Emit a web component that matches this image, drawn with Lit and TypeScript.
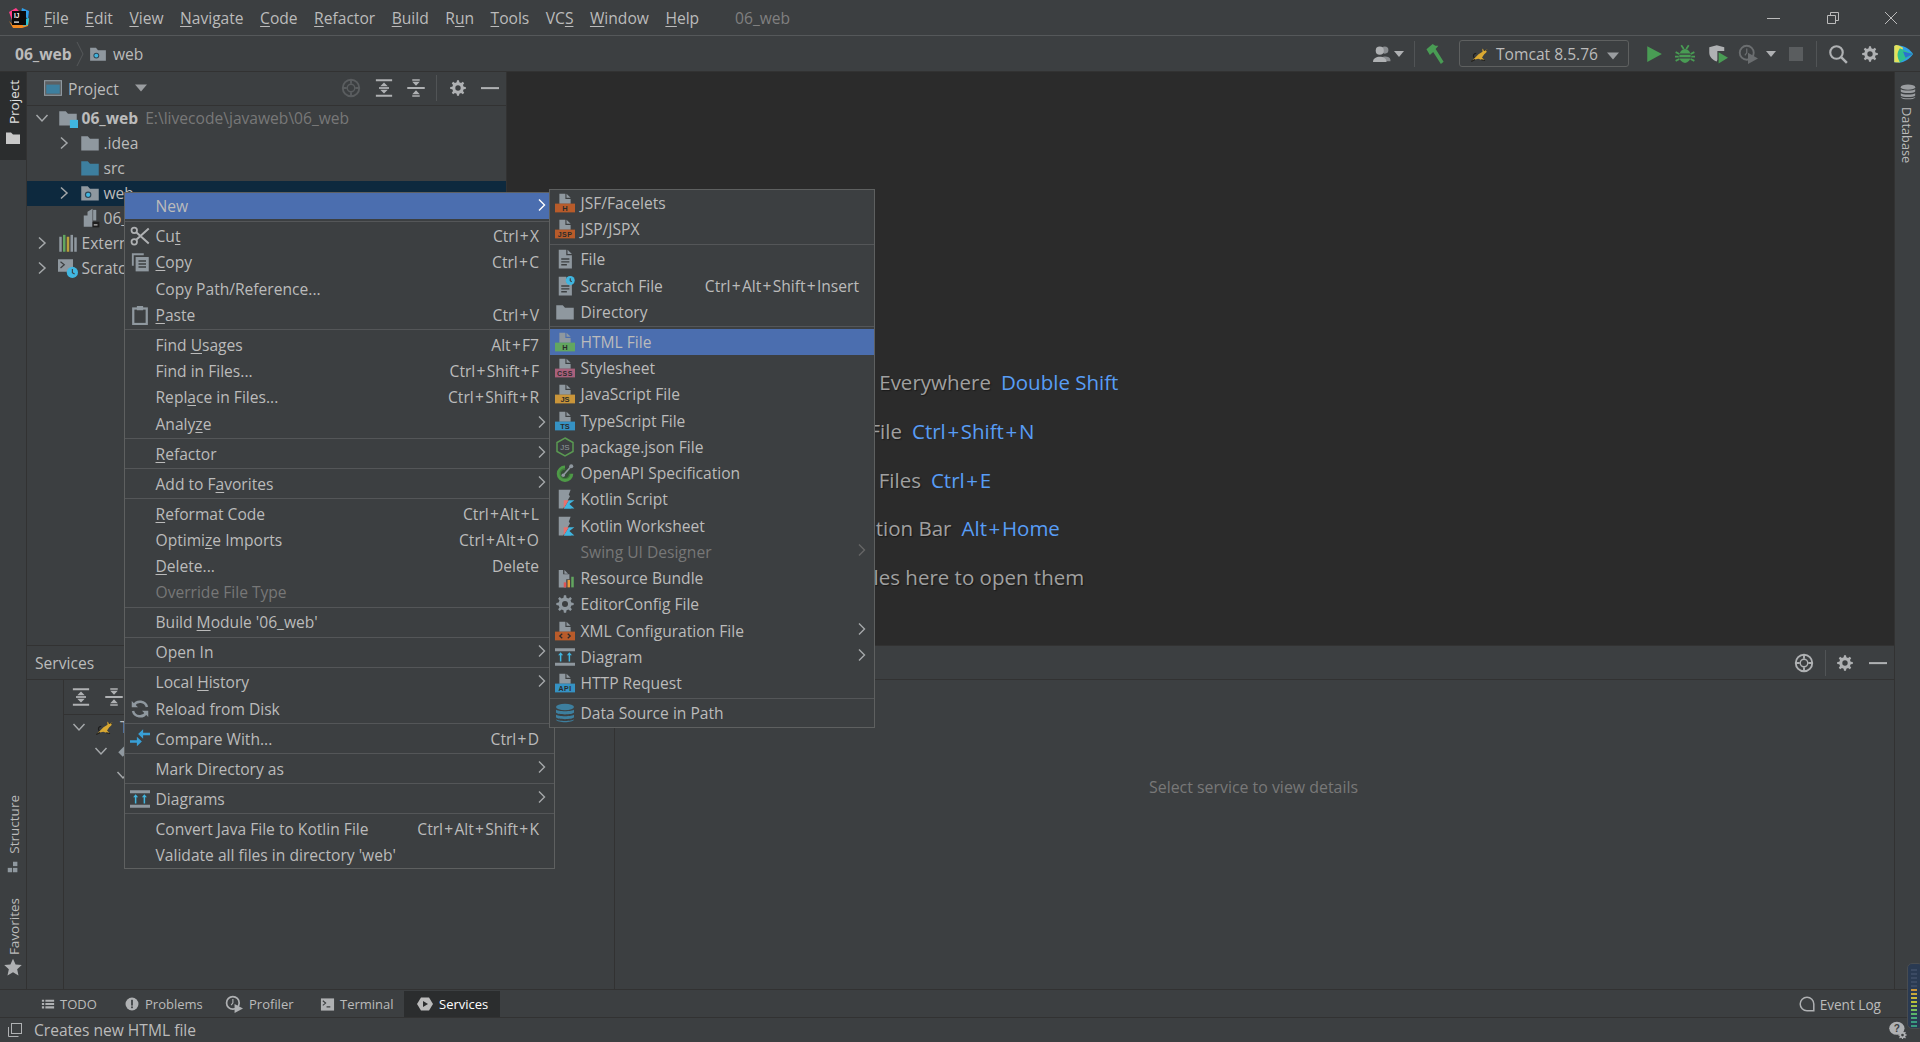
import { LitElement, html, css, svg, nothing, TemplateResult } from "lit";
import { customElement } from "lit/decorators.js";

const G = "#8f989f";
const BLUE = "#40b6e0";
const GREEN = "#499c54";
const DARK = "#3c3f41";

const ic = (body: unknown, size = 20) =>
  html`<svg class="ic" width=${size} height=${size} viewBox="0 0 16 16">${body}</svg>`;

// gear outline computed from teeth count, same shape everywhere
function gearPath(cx: number, cy: number, ro: number, ri: number, teeth = 8) {
  let d = "";
  const step = (Math.PI * 2) / teeth;
  for (let i = 0; i < teeth; i++) {
    const a = i * step - Math.PI / 2;
    const pts = [
      [a - step * 0.3, ri],
      [a - step * 0.16, ro],
      [a + step * 0.16, ro],
      [a + step * 0.3, ri],
    ];
    for (const [t, r] of pts) {
      d += (d ? "L" : "M") + (cx + r * Math.cos(t)).toFixed(2) + " " + (cy + r * Math.sin(t)).toFixed(2);
    }
  }
  return d + "Z";
}

const gear = (c = "#afb1b3") => svg`<path d=${gearPath(8, 8, 7, 5.2)} fill=${c}/><circle cx="8" cy="8" r="2.4" fill=${DARK}/>`;
const folder = (c = G) => svg`<path d="M1 2.5h5.2L8 4.6h7V14H1z" fill=${c}/>`;
const dotFolder = svg`${folder("#8f989f")}<circle cx="6.5" cy="9.4" r="2.6" fill="#2f4655"/><circle cx="6.5" cy="9.4" r="1.7" fill=${BLUE}/>`;

const docTop = svg`<path d="M3.5 0.5h4.8v4.2h4.2V8.5h-9z" fill=${G}/><path d="M9.2 0.5l3.3 3.3H9.2z" fill=${G}/>`;
const banner = (color: string, label: string, dark = "#2b2b2b") =>
  svg`${docTop}<rect x="0" y="8.5" width="16" height="7" fill=${color}/><text x="8" y="14.3" text-anchor="middle" font-family="Liberation Sans, sans-serif" font-size=${label.length > 2 ? 5.6 : 6} font-weight="700" letter-spacing=${label.length > 2 ? 0.4 : 0} fill=${dark}>${label}</text>`;
const plainDoc = svg`<path d="M3 .5h6v4.5h4.5V15.5H3z" fill=${G}/><path d="M10 .5l3.5 3.5H10z" fill=${G}/><path d="M5 8h6.5M5 10.3h6.5M5 12.6h4.5" stroke=${DARK} stroke-width="1.1"/>`;
const kotlin = svg`<path d="M3 .5h9.5L11 4.5l1 1.3L6.5 15.5H3z" fill=${G}/><path d="M7 15.5L11 9h4.5L11.5 12l4 3.5z" fill="#40b6e0"/><path d="M7 15.5V9h4z" fill="#e8716d"/><path d="M7 15.5l4-3.5 2 3.5z" fill="#40b6e0"/>`;
const diagram = svg`<rect x="0" y="1" width="16" height="2.4" fill=${G}/><rect x="0" y="12.6" width="16" height="2.4" fill=${G}/><path d="M4.5 11.5V6M11.5 11.5V6" stroke=${BLUE} stroke-width="1.2"/><path d="M4.5 4.2l2 2.4h-4zM11.5 4.2l2 2.4h-4z" fill=${BLUE}/>`;
const database = (c: string) => svg`<ellipse cx="8" cy="3.2" rx="7.2" ry="2.6" fill=${c}/><path d="M.8 5.2C2 7 14 7 15.2 5.2V7.6C14 9.6 2 9.6 .8 7.6zM.8 9.2C2 11 14 11 15.2 9.2V11.4C14 13.4 2 13.4 .8 11.4zM.8 13C2 14.8 14 14.8 15.2 13V13.4C14 16 2 16 .8 13.4z" fill=${c}/>`;

const tomcatIcon = svg`<path d="M1 14l3-1.6 2.6-.6L9 12.6l3 .6-2.4-2.4 1.8-2.6 1.6-1.4.8-2.6-1.2.8h-1.4L9.8 3.6 10 6.2 6.8 8.2 4.2 10.8z" fill="#d9a832"/><path d="M1 14l3-1.6M5 7.5C3 7.5 2 9 3.4 11.2M9 12.6l3 .6" stroke="#1d1d1d" stroke-width="1" fill="none"/><circle cx="11.4" cy="5" r=".5" fill="#222"/><circle cx="13" cy="5" r=".5" fill="#222"/>`;

const icons: Record<string, TemplateResult | unknown> = {
  scissors: svg`<circle cx="3.4" cy="3.4" r="2.2" fill="none" stroke="#afb1b3" stroke-width="1.4"/><circle cx="3.4" cy="12.6" r="2.2" fill="none" stroke="#afb1b3" stroke-width="1.4"/><path d="M5 5l10 9M5 11L15 2" stroke="#afb1b3" stroke-width="1.6"/>`,
  copy: svg`<path d="M1.5 1H11v1.5H3V11H1.5z" fill=${G}/><rect x="4.5" y="4" width="10.5" height="11.5" fill=${G}/><path d="M6.8 7.2h6M6.8 9.6h6M6.8 12h6" stroke=${DARK} stroke-width="1.1"/>`,
  paste: svg`<rect x="2.6" y="2.8" width="10.8" height="12.4" fill="none" stroke=${G} stroke-width="1.8"/><rect x="5.5" y=".8" width="5" height="3.4" fill=${G}/>`,
  reload: svg`<path d="M13.6 6.4A5.8 5.8 0 0 0 3 5M2.4 9.6A5.8 5.8 0 0 0 13 11" fill="none" stroke=${G} stroke-width="2"/><path d="M1.4 1.6v5h5zM14.6 14.4v-5h-5z" fill=${G}/>`,
  compare: svg`<path d="M0 11h6.5V8.2L10.5 12l-4 3.8V13H0z" fill="#389fd6" transform="translate(-1 -2)"/><path d="M16 5H9.5V7.8L5.5 4l4-3.8V3H16z" fill="#389fd6" transform="translate(1 0)"/>`,
  diagram,
  jsf: banner("#b85b2a", "H"),
  jsp: banner("#b85b2a", "JSP"),
  file: plainDoc,
  scratch: svg`${plainDoc}<circle cx="12.2" cy="3.6" r="3.6" fill=${BLUE}/><path d="M12.2 1.8v2l1.2.8" stroke=${DARK} stroke-width=".9" fill="none"/>`,
  dir: folder(),
  html: banner("#62a65f", "H"),
  css: banner("#a8607b", "CSS"),
  js: banner("#c9953a", "JS"),
  ts: banner("#3592c4", "TS"),
  pkg: svg`<path d="M8 .8l6.4 3.6v7.2L8 15.2l-6.4-3.6V4.4z" fill="none" stroke="#5a9a52" stroke-width="1.2"/><text x="8" y="10.6" text-anchor="middle" font-family="Liberation Sans, sans-serif" font-size="6.4" fill=${G}>JS</text>`,
  openapi: svg`<path d="M8 2a6.6 6.6 0 1 0 6.6 6.6h-3.3A3.3 3.3 0 1 1 8 5.3z" fill="#4e9a47"/><circle cx="8" cy="8.4" r="4.4" fill="#2f5a30" opacity=".5"/><path d="M6.8 9.6L12.6 3" stroke=${G} stroke-width="1.3"/><circle cx="6.6" cy="9.8" r="1.4" fill=${G}/><circle cx="13" cy="2.6" r="1.6" fill=${G}/>`,
  kotlin,
  bundle: svg`<path d="M3 1.5h3.5V5h5v4H9v6.5H3z" fill=${G}/><path d="M7.5 1.5l3 3h-3z" fill=${G}/><rect x="7" y="11.5" width="2" height="4" fill="#e05555"/><rect x="10" y="9.5" width="2" height="6" fill="#e89a3c"/><rect x="13" y="7" width="2" height="8.5" fill="#62a65f"/>`,
  editorconfig: gear(G),
  xml: svg`${docTop}<rect x="0" y="8.5" width="16" height="7" fill="#b85b2a"/><path d="M5.8 10.2L3.8 12l2 1.8M10.2 10.2L12.2 12l-2 1.8" fill="none" stroke="#2b2b2b" stroke-width="1"/>`,
  http: banner("#3592c4", "API"),
  data: database("#3d7f9f"),
  tomcat: tomcatIcon,
};

type Item = { t?: string; k?: string; i?: string; sub?: boolean; on?: boolean; off?: boolean };

const mainMenu: (Item | null)[] = [
  { t: "New", sub: true, on: true },
  null,
  { t: "Cu&t", k: "Ctrl+X", i: "scissors" },
  { t: "&Copy", k: "Ctrl+C", i: "copy" },
  { t: "Copy Path/Reference..." },
  { t: "&Paste", k: "Ctrl+V", i: "paste" },
  null,
  { t: "Find &Usages", k: "Alt+F7" },
  { t: "Find in Files...", k: "Ctrl+Shift+F" },
  { t: "Repl&ace in Files...", k: "Ctrl+Shift+R" },
  { t: "Analy&ze", sub: true },
  null,
  { t: "&Refactor", sub: true },
  null,
  { t: "Add to F&avorites", sub: true },
  null,
  { t: "&Reformat Code", k: "Ctrl+Alt+L" },
  { t: "Optimi&ze Imports", k: "Ctrl+Alt+O" },
  { t: "&Delete...", k: "Delete" },
  { t: "Override File Type", off: true },
  null,
  { t: "Build &Module '06_web'" },
  null,
  { t: "Open In", sub: true },
  null,
  { t: "Local &History", sub: true },
  { t: "Reload from Disk", i: "reload" },
  null,
  { t: "Compare With...", k: "Ctrl+D", i: "compare" },
  null,
  { t: "Mark Directory as", sub: true },
  null,
  { t: "Diagrams", sub: true, i: "diagram" },
  null,
  { t: "Convert Java File to Kotlin File", k: "Ctrl+Alt+Shift+K" },
  { t: "Validate all files in directory 'web'" },
];

const newMenu: (Item | null)[] = [
  { t: "JSF/Facelets", i: "jsf" },
  { t: "JSP/JSPX", i: "jsp" },
  null,
  { t: "File", i: "file" },
  { t: "Scratch File", k: "Ctrl+Alt+Shift+Insert", i: "scratch" },
  { t: "Directory", i: "dir" },
  null,
  { t: "HTML File", i: "html", on: true },
  { t: "Stylesheet", i: "css" },
  { t: "JavaScript File", i: "js" },
  { t: "TypeScript File", i: "ts" },
  { t: "package.json File", i: "pkg" },
  { t: "OpenAPI Specification", i: "openapi" },
  { t: "Kotlin Script", i: "kotlin" },
  { t: "Kotlin Worksheet", i: "kotlin" },
  { t: "Swing UI Designer", sub: true, off: true },
  { t: "Resource Bundle", i: "bundle" },
  { t: "EditorConfig File", i: "editorconfig" },
  { t: "XML Configuration File", sub: true, i: "xml" },
  { t: "Diagram", sub: true, i: "diagram" },
  { t: "HTTP Request", i: "http" },
  null,
  { t: "Data Source in Path", i: "data" },
];

// "Cu&t" -> Cu<u>t</u>
function mn(text: string) {
  const p = text.indexOf("&");
  if (p < 0) return text;
  return html`${text.slice(0, p)}<u>${text[p + 1]}</u>${text.slice(p + 2)}`;
}

// the plus signs of shortcuts run wider than in our font
function keys(text: string) {
  const parts = text.split("+");
  return parts.map((p, i) => (i ? html`<span class="pl">+</span>${p}` : p));
}

const menuBar = ["&File", "&Edit", "&View", "&Navigate", "&Code", "&Refactor", "&Build", "R&un", "&Tools", "VC&S", "&Window", "&Help"];

// row of icons given by their centre x, gaps come from the data
function seq(start: number, items: { c: number; w: number; h: unknown }[]) {
  let x = start;
  return items.map((it) => {
    const left = it.c - it.w / 2;
    const gap = left - x;
    x = left + it.w;
    return html`<span class="slot" style="margin-left:${gap}px;width:${it.w}px">${it.h}</span>`;
  });
}

const caret = html`<svg width="12" height="8" viewBox="0 0 12 8"><path d="M0 .5h12L6 7.5z" fill="#9a9da0"/></svg>`;
const smallCaret = html`<svg width="10" height="6" viewBox="0 0 10 6"><path d="M0 0h10L5 6z" fill="#afb1b3"/></svg>`;
const sep = html`<span class="vsep"></span>`;
const chevR = html`<svg width="10" height="14" viewBox="0 0 10 14"><path d="M2 1.5L8 7l-6 5.5" fill="none" stroke="#a5a8aa" stroke-width="1.5"/></svg>`;
const chevD = html`<svg width="14" height="10" viewBox="0 0 14 10"><path d="M1.5 2L7 8l5.5-6" fill="none" stroke="#a5a8aa" stroke-width="1.5"/></svg>`;

const target = (c: string) => ic(svg`<circle cx="8" cy="8" r="6.6" fill="none" stroke=${c} stroke-width="1.5"/><circle cx="8" cy="8" r="3" fill="none" stroke=${c} stroke-width="1.1"/><path d="M8 1v3.6M8 11.4V15M1 8h3.6M11.4 8H15" stroke=${c} stroke-width="1.5"/>`, 20);
const expandAll = ic(svg`<path d="M1.5 1h13v1.6h-13zM1.5 13.4h13V15h-13z" fill="#afb1b3"/><path d="M8 3.6l3 3H5zM8 12.4l3-3H5z" fill="#afb1b3"/><rect x="4" y="7.3" width="8" height="1.4" fill="#afb1b3"/>`);
const collapseAll = ic(svg`<rect x="1" y="7.2" width="14" height="1.6" fill="#afb1b3"/><path d="M8 6.2L5 3h6zM8 9.8L5 13h6z" fill="#afb1b3"/><rect x="5" y="1" width="6" height="1.2" fill="#afb1b3"/><rect x="5" y="13.8" width="6" height="1.2" fill="#afb1b3"/>`);

const tree = [
  { lv: 0, open: true, icon: svg`${folder()}<rect x="9.5" y="9.5" width="6.5" height="6.5" fill=${BLUE}/>`, name: "06_web", path: "E:\\livecode\\javaweb\\06_web", bold: true },
  { lv: 1, closed: true, icon: folder(), name: ".idea" },
  { lv: 1, icon: folder("#3d7f9f"), name: "src" },
  { lv: 1, closed: true, icon: dotFolder, name: "web", sel: true },
  { lv: 1, icon: svg`<path d="M3 6h3V3l4-2.5V15H3z" fill=${G}/><path d="M10.5 1.5h2.5V10h-2.5z" fill=${G}/><rect x="10" y="11" width="5.5" height="4.5" fill="#1e1e1e"/><rect x="11" y="13" width="3" height="1" fill="#bbb"/>`, name: "06_web.iml" },
  { lv: 0, closed: true, icon: svg`<rect x="1" y="3" width="2" height="12" fill=${G}/><rect x="4" y="1.5" width="2" height="13.5" fill="#62a65f"/><rect x="7" y="3" width="2" height="12" fill="#b8a13c"/><rect x="10" y="1.5" width="2" height="13.5" fill=${G}/><rect x="13" y="3.5" width="2" height="11.5" fill=${G}/>`, name: "External Libraries" },
  { lv: 0, closed: true, icon: svg`<rect x="0" y="1" width="12" height="10" fill=${G}/><path d="M2 3l3 2.4L2 8" stroke=${DARK} stroke-width="1" fill="none"/><circle cx="11.5" cy="11.5" r="4.5" fill=${BLUE}/><path d="M11.5 8.8v3l1.8 1" stroke=${DARK} stroke-width=".9" fill="none"/>`, name: "Scratches and Consoles" },
];

const hints: { off: number; t: string; k?: string }[] = [
  { off: -1, t: "Search Everywhere", k: "Double Shift" },
  { off: 2, t: "Go to File", k: "Ctrl+Shift+N" },
  { off: -2, t: "Recent Files", k: "Ctrl+E" },
  { off: 1, t: "Navigation Bar", k: "Alt+Home" },
  { off: -2, t: "Drop files here to open them" },
];

@customElement("app-root")
export class AppRoot extends LitElement {
  static styles = css`
    :host {
      display: block;
      width: 1920px;
      height: 1042px;
      position: relative;
      overflow: hidden;
      background: #3c3f41;
      color: #bbbbbb;
      font-family: "Open Sans", "Noto Sans", sans-serif;
      font-size: 15.6px;
    }
    .ic { display: block; flex: none; }
    u { text-underline-offset: 2px; text-decoration-thickness: 1px; }
    .pl { margin: 0 0.08em; }
    .slot { display: flex; align-items: center; justify-content: center; flex: none; }
    .vsep { display: block; width: 1px; height: 26px; background: #515456; }

    .page { display: flex; flex-direction: column; height: 100%; }

    .title { height: 35px; display: flex; align-items: center; border-bottom: 1px solid #55585a; flex: none; }
    .logo { margin-left: 9px; width: 20px; height: 20px; flex: none; }
    .mbar { display: flex; gap: 16.5px; margin-left: 15px; color: #bbbbbb; }
    .ptitle { margin-left: 36px; color: #808080; }
    .winbtns { margin-left: auto; margin-right: 22px; display: flex; }

    .nav { height: 35px; display: flex; align-items: center; border-bottom: 1px solid #323232; flex: none; }
    .crumb { margin-left: 15px; font-weight: 700; width: 58px; color: #bbbbbb; }
    .crumb-sep { width: 8px; height: 26px; margin-left: 3px; }
    .crumb-ic { margin-left: 5px; }
    .crumb-web { margin-left: 6px; }
    .nav-right { margin-left: auto; padding-right: 7px; display: flex; align-items: center; }
    .combo {
      width: 170px; height: 27px; box-sizing: border-box; flex: none;
      border: 1px solid #5e6060; border-radius: 3px;
      display: flex; align-items: center; padding-left: 10px; gap: 6px;
      color: #bbbbbb;
    }
    .combo-c { margin-left: 3px; }

    .mid { flex: 1; display: flex; min-height: 0; }
    .stripe { width: 26px; flex: none; display: flex; flex-direction: column; align-items: center; border-right: 1px solid #323232; }
    .stripe.right { border-right: none; border-left: 1px solid #323232; padding-top: 12px; padding-left: 1px; box-sizing: border-box; }
    .vt { writing-mode: vertical-rl; transform: rotate(180deg); font-size: 13.5px; line-height: 16px; margin-left: 1px; }
    .vtr { writing-mode: vertical-rl; font-size: 12.8px; line-height: 16px; margin-top: 7px; margin-right: 3px; }
    .vtab {
      width: 26px; height: 88px; background: #2b2d2e; display: flex; flex-direction: column;
      align-items: center; padding-top: 8px; box-sizing: border-box; gap: 6px; color: #e0e0e0;
    }
    .vtab.plain { background: none; height: auto; padding: 0; color: #bbbbbb; }
    .spring { flex: 1; }
    .s-struct { margin-bottom: 24px; }
    .s-fav { margin-bottom: 13px; gap: 3px; }

    .work { flex: 1; display: flex; flex-direction: column; min-width: 0; }
    .upper { height: 573px; display: flex; flex: none; }
    .project { width: 479px; flex: none; border-right: 1px solid #323232; }
    .phead { height: 32.5px; display: flex; align-items: center; border-bottom: 1px solid #323232; }
    .phead .name { margin-left: 6px; margin-top: 1px; width: 55px; }
    .row { height: 25px; display: flex; align-items: center; white-space: nowrap; }
    .row.sel { background: #0d293e; }
    .row .arrow { width: 14px; display: flex; justify-content: center; flex: none; }
    .row.lv0 { padding-left: 8px; }
    .row.lv1 { padding-left: 30px; }
    .row .label { margin-left: 3.5px; }
    .row .bold { font-weight: 700; }
    .row .path { color: #787878; margin-left: 7px; }
    .row .gap { width: 9px; flex: none; }

    .editor { flex: 1; background: #2b2b2b; display: flex; flex-direction: column; padding-top: 295px; padding-left: 303px; box-sizing: border-box; }
    .hint { height: 48.8px; font-size: 20.5px; line-height: 30px; color: #a0a0a0; text-shadow: 1px 1px 1px #1a1a1a; white-space: nowrap; }
    .hint b { font-weight: 400; color: #589df6; margin-left: 10px; text-shadow: none; }

    .services { flex: 1; display: flex; flex-direction: column; border-top: 1px solid #323232; min-height: 0; }
    .shead { height: 33px; display: flex; align-items: center; border-bottom: 1px solid #323232; flex: none; }
    .shead .name { margin-left: 8px; }
    .shead .tools { margin-left: auto; padding-right: 7px; display: flex; align-items: center; }
    .sbody { flex: 1; display: flex; min-height: 0; }
    .sleft { width: 36px; border-right: 1px solid #323232; flex: none; }
    .stree { width: 550px; border-right: 1px solid #323232; flex: none; display: flex; flex-direction: column; }
    .stool { height: 34px; display: flex; align-items: center; border-bottom: 1px solid #323232; flex: none; }
    .srow { height: 24px; display: flex; align-items: center; white-space: nowrap; overflow: hidden; }
    .srow.a { padding-left: 8px; gap: 9px; }
    .srow.a span { margin-left: -4px; }
    .srow.b { padding-left: 30px; gap: 8px; }
    .srow.c { padding-left: 52px; }
    .sdetail { flex: 1; display: flex; align-items: center; justify-content: center; color: #787878; padding-bottom: 96px; padding-right: 2px; font-size: 15.9px; }

    .toolbar { height: 26px; display: flex; align-items: center; border-top: 1px solid #323232; border-bottom: 1px solid #323232; flex: none; font-size: 13px; padding-top: 1px; box-sizing: content-box; }
    .tw { display: flex; align-items: center; height: 100%; flex: none; box-sizing: border-box; }
    .tw.todo { margin-left: 41px; width: 84px; gap: 5px; }
    .tw.prob { width: 100px; gap: 6px; }
    .tw.prof { width: 94.5px; gap: 6px; }
    .tw.term { width: 84.5px; gap: 5.5px; }
    .tw.serv { width: 96px; background: #2b2d2e; color: #fff; padding-left: 13px; gap: 6px; }
    .tw.log { margin-left: auto; margin-right: 39px; gap: 5px; font-size: 13.6px; }

    .status { height: 24px; flex: none; display: flex; align-items: center; }
    .status .msg { margin-left: 11px; font-size: 15.6px; }
    .status .help { margin-left: auto; margin-right: 13px; }

    .popup {
      position: absolute; box-sizing: border-box; background: #3c3f41; border: 1px solid #5e6060;
      display: flex; flex-direction: column; white-space: nowrap;
    }
    .popup.main { left: 124px; top: 192px; width: 431px; height: 677px; }
    .popup.sub { left: 549px; top: 189px; width: 326px; height: 539px; }
    .mi { height: 26.25px; flex: none; display: flex; align-items: center; padding-left: 5px; }
    .mi .mi-ic { width: 20px; height: 20px; flex: none; margin-right: 5.5px; }
    .mi .k { margin-left: auto; padding-right: 15px; }
    .mi .arr { margin-left: auto; margin-right: 8px; margin-top: -3px; display: flex; }
    .mi.on { background: #4b6eaf; }
    .mi.off { color: #777777; }
    .msep { height: 3.75px; flex: none; display: flex; align-items: center; }
    .msep::after { content: ""; flex: 1; height: 1px; background: #545658; }
    .meter {
      position: absolute; left: 1907px; top: 963px; width: 16px; height: 66px; box-sizing: border-box;
      border-radius: 5px; background: #2a3a52; border: 1px solid #4a4d50;
      display: flex; flex-direction: column; gap: 2px; padding: 5px 2px 4px 3px;
    }
    .meter i { display: block; height: 2px; width: 6px; flex: none; }
  `;

  private menu(items: (Item | null)[]) {
    return items.map((m) =>
      m === null
        ? html`<div class="msep"></div>`
        : html`<div class="mi ${m.on ? "on" : ""} ${m.off ? "off" : ""}">
            <span class="mi-ic">${m.i ? ic(icons[m.i]) : nothing}</span>
            <span>${mn(m.t!)}</span>
            ${m.k ? html`<span class="k">${keys(m.k)}</span>` : nothing}
            ${m.sub
              ? html`<span class="arr"><svg width="8" height="14" viewBox="0 0 8 14"><path d="M1 1.5L6.5 7 1 12.5" fill="none" stroke=${m.on ? "#ffffff" : m.off ? "#666" : "#a5a8aa"} stroke-width="1.4"/></svg></span>`
              : nothing}
          </div>`
    );
  }

  private meter() {
    const cols = ["#3b4a63", "#3b4a63", "#3b4a63", "#3b4a63", "#3b4a63", "#c9953a", "#c9a83a", "#c9b83a", "#b8c03a", "#a0c04a", "#7ac05a", "#5ab56a", "#4aa87a", "#3a9a80", "#3a9a80"];
    return html`<div class="meter">${cols.map((c) => html`<i style="background:${c}"></i>`)}</div>`;
  }

  render() {
    return html`
      <div class="page">
        <div class="title">
          <svg class="logo" viewBox="0 0 20 20">
            <path d="M0 4L7 0l3 3-6 6v6z" fill="#ff3e8a" />
            <path d="M13 0l7 3-1 8-7-6z" fill="#2f9ee8" />
            <path d="M0 13l4 7h9l6-2 1-7-16 6z" fill="#f58a1f" />
            <path d="M14 18l5-1 1-7-6 2z" fill="#25c4d8" />
            <rect x="3" y="3" width="14" height="14" fill="#0b0b0b" />
            <text x="5" y="10" font-size="6.5" font-family="Liberation Sans, sans-serif" font-weight="700" fill="#fff">IJ</text>
            <rect x="5" y="13.5" width="5" height="1.2" fill="#fff" />
          </svg>
          <div class="mbar">${menuBar.map((m) => html`<span>${mn(m)}</span>`)}</div>
          <span class="ptitle">06_web</span>
          <div class="winbtns">
            ${seq(1740, [
              { c: 1774, w: 14, h: html`<svg width="14" height="14"><path d="M0 7.5h13" stroke="#bbb" stroke-width="1"/></svg>` },
              { c: 1833, w: 14, h: html`<svg width="14" height="14"><path d="M1.5 4.5h8v8h-8zM4.5 4V1.5h8v8H10" fill="none" stroke="#bbb"/></svg>` },
              { c: 1891, w: 14, h: html`<svg width="14" height="14"><path d="M1 1l12 12M13 1L1 13" stroke="#bbb"/></svg>` },
            ])}
          </div>
        </div>

        <div class="nav">
          <span class="crumb">06_web</span>
          <svg class="crumb-sep" viewBox="0 0 8 26"><path d="M1 1l6 12L1 25" fill="none" stroke="#55585a"/></svg>
          <span class="crumb-ic">${ic(dotFolder, 18)}</span>
          <span class="crumb-web">web</span>
          <div class="nav-right">
            ${seq(1368, [
              { c: 1382, w: 18, h: ic(svg`<circle cx="10.5" cy="4.5" r="3.2" fill="#8a8d90"/><path d="M6 14c0-5 9-5 9.5-1v1.5H7z" fill="#8a8d90"/><circle cx="6" cy="5" r="3.6" fill="#afb1b3"/><path d="M0 15c0-6 12-6 12 0z" fill="#afb1b3"/>`, 18) },
              { c: 1399, w: 10, h: smallCaret },
              { c: 1414, w: 1, h: sep },
              { c: 1434, w: 22, h: ic(svg`<path d="M2.5 4.5L7 .8l2 1.2 2.2 0L9.2 4.4 15 13.6l-2 1.6L7.4 6.6 5 8.8z" fill=${GREEN}/>`, 22) },
              { c: 1544, w: 170, h: html`<div class="combo">${ic(tomcatIcon, 20)}<span>Tomcat 8.5.76</span><span class="combo-c">${caret}</span></div>` },
              { c: 1654, w: 18, h: ic(svg`<path d="M2 1l13 7-13 7z" fill=${GREEN}/>`, 18) },
              { c: 1685, w: 20, h: ic(svg`<ellipse cx="8" cy="9.5" rx="4.6" ry="5.6" fill=${GREEN}/><path d="M3.4 8h9.2M3.4 11h9.2" stroke=${DARK} stroke-width="1"/><path d="M5 1l2 3M11 1L9 4M.5 6.5l3 1.5M15.5 6.5l-3 1.5M.5 13.5l3-1.5M15.5 13.5l-3-1.5M0 10h3M13 10h3" stroke=${GREEN} stroke-width="1.4"/>`, 20) },
              { c: 1718, w: 20, h: ic(svg`<path d="M1 2.5L7 1l6 1.5v3H7.5v7L7 14c-3-1-6-3.5-6-7z" fill="#afb1b3"/><path d="M8.5 6.5L16 11l-7.5 4.5z" fill=${GREEN}/>`, 20) },
              { c: 1748, w: 20, h: ic(svg`<circle cx="7" cy="7" r="5.6" fill="none" stroke="#6b6e70" stroke-width="1.5"/><path d="M7 3.5V7L5.5 9" stroke="#6b6e70" fill="none"/><path d="M8 7l8 4.5-8 4.5z" fill="#6b6e70"/>`, 20) },
              { c: 1771, w: 10, h: smallCaret },
              { c: 1796, w: 14, h: html`<svg width="14" height="14"><rect width="14" height="14" fill="#5a5d5f"/></svg>` },
              { c: 1816, w: 1, h: sep },
              { c: 1838, w: 20, h: ic(svg`<circle cx="6.8" cy="6.8" r="5" fill="none" stroke="#afb1b3" stroke-width="1.7"/><path d="M10.5 10.5l4.6 4.6" stroke="#afb1b3" stroke-width="2"/>`, 20) },
              { c: 1870, w: 18, h: ic(gear(), 18) },
              { c: 1903, w: 20, h: ic(svg`<path d="M1 1.5C8 0 13 3.5 16 8 13 12.5 8 16 1 14.5z" fill="#2f9ee8"/><path d="M1 1.5C2.5 0 5 1 8 3L5.5 14.8 1 14.5z" fill="#e4e25a"/><path d="M5.5 3.4L16 8 5.5 14.8C3 10 3 7 5.5 3.4z" fill="#2fbf8f"/><path d="M8 6l8 2-6 3z" fill="#2b6fd0"/>`, 20) },
            ])}
          </div>
        </div>

        <div class="mid">
          <div class="stripe">
            <div class="vtab">
              <span class="vt">Project</span>
              ${ic(svg`<path d="M1 2.5h5L8 4.5h7V14H1z" fill="#c8c8c8"/>`, 16)}
            </div>
            <div class="spring"></div>
            <div class="vtab plain s-struct">
              <span class="vt">Structure</span>
              ${ic(svg`<rect x="8" y="2" width="5" height="5" fill=${G}/><rect x="2" y="9" width="5" height="5" fill=${G}/><rect x="8" y="9" width="5" height="5" fill=${G}/>`, 14)}
            </div>
            <div class="vtab plain s-fav">
              <span class="vt">Favorites</span>
              ${ic(svg`<path d="M8 .6l2.3 5.1 5.5.6-4.1 3.7 1.2 5.5L8 12.7 3.1 15.6l1.2-5.5L.2 6.3l5.5-.6z" fill="#afb1b3"/>`, 18)}
            </div>
          </div>

          <div class="work">
            <div class="upper">
              <div class="project">
                <div class="phead">
                  ${seq(27, [
                    { c: 53, w: 18, h: ic(svg`<rect x=".5" y="1.5" width="15" height="13" fill="#5d6063" stroke="#8f989f"/><rect x="2" y="5" width="12" height="8" fill="#3d7f9f"/>`, 18) },
                  ])}
                  <span class="name">Project</span>
                  ${seq(123, [
                    { c: 141, w: 12, h: caret },
                    { c: 351, w: 20, h: target("#5a5d5f") },
                    { c: 384, w: 20, h: expandAll },
                    { c: 416, w: 20, h: collapseAll },
                    { c: 436, w: 1, h: sep },
                    { c: 458, w: 18, h: ic(gear(), 18) },
                    { c: 490, w: 18, h: ic(svg`<rect x="0" y="7.2" width="16" height="1.8" fill="#afb1b3"/>`, 18) },
                  ])}
                </div>
                ${tree.map(
                  (r) => html`<div class="row lv${r.lv} ${r.sel ? "sel" : ""}">
                    <span class="arrow">${r.open ? chevD : r.closed ? chevR : nothing}</span>
                    <span class="gap"></span>
                    ${ic(r.icon, 20)}
                    <span class="label ${r.bold ? "bold" : ""}">${r.name}</span>
                    ${r.path ? html`<span class="path">${r.path}</span>` : nothing}
                  </div>`
                )}
              </div>
              <div class="editor">
                ${hints.map(
                  (h) => html`<div class="hint" style="margin-left:${h.off}px">${h.t}${h.k ? html`<b>${keys(h.k)}</b>` : nothing}</div>`
                )}
              </div>
            </div>

            <div class="services">
              <div class="shead">
                <span class="name">Services</span>
                <div class="tools">
                  ${seq(1700, [
                    { c: 1804, w: 20, h: target("#afb1b3") },
                    { c: 1825, w: 1, h: sep },
                    { c: 1845, w: 18, h: ic(gear(), 18) },
                    { c: 1878, w: 18, h: ic(svg`<rect x="0" y="7.2" width="16" height="1.8" fill="#afb1b3"/>`, 18) },
                  ])}
                </div>
              </div>
              <div class="sbody">
                <div class="sleft"></div>
                <div class="stree">
                  <div class="stool">
                    ${seq(63, [
                      { c: 80, w: 20, h: expandAll },
                      { c: 113, w: 20, h: collapseAll },
                    ])}
                  </div>
                  <div class="srow a">${chevD}${ic(tomcatIcon, 20)}<span>Tomcat Server</span></div>
                  <div class="srow b">${chevD}${ic(svg`<path d="M2 9l7-7 4 4-7 7z" fill=${G}/>`, 18)}<span>Finished</span></div>
                  <div class="srow c">${chevD}</div>
                </div>
                <div class="sdetail">Select service to view details</div>
              </div>
            </div>
          </div>

          <div class="stripe right">
            ${ic(database("#9a9da0"), 16)}
            <span class="vtr">Database</span>
          </div>
        </div>

        <div class="toolbar">
          <div class="tw todo">${ic(svg`<path d="M1 3h2.6v2.4H1zM5 3h10v2.4H5zM1 6.8h2.6v2.4H1zM5 6.8h10v2.4H5zM1 10.6h2.6V13H1zM5 10.6h10V13H5z" fill="#afb1b3"/>`, 14)}<span>TODO</span></div>
          <div class="tw prob">${ic(svg`<circle cx="8" cy="8" r="7.4" fill="#afb1b3"/><rect x="7" y="3.2" width="2" height="6.6" fill=${DARK}/><rect x="7" y="10.8" width="2" height="2" fill=${DARK}/>`, 14)}<span>Problems</span></div>
          <div class="tw prof">${ic(svg`<circle cx="7" cy="7" r="5.6" fill="none" stroke="#afb1b3" stroke-width="1.5"/><path d="M7 3.5V7L5.5 9" stroke="#afb1b3" fill="none"/><path d="M8.5 8l7.5 4-7.5 4z" fill="#afb1b3"/>`, 18)}<span>Profiler</span></div>
          <div class="tw term">${ic(svg`<rect x="1" y="1.5" width="14" height="13" fill="#afb1b3"/><path d="M3 4l3 2.5L3 9M7 10.5h4" stroke=${DARK} stroke-width="1.2" fill="none"/>`, 15)}<span>Terminal</span></div>
          <div class="tw serv">${ic(svg`<path d="M4 1.5h8l4 6.5-4 6.5H4L0 8z" fill="#bbbbbb"/><path d="M6 5l5 3-5 3z" fill="#2b2d2e"/>`, 16)}<span>Services</span></div>
          <div class="tw log">${ic(svg`<path d="M8 1.2a6.8 6.8 0 0 0 0 13.6h6.8V8A6.8 6.8 0 0 0 8 1.2z" fill="none" stroke="#afb1b3" stroke-width="1.5"/>`, 16)}<span>Event Log</span></div>
        </div>

        <div class="status">
          ${seq(0, [{ c: 15, w: 16, h: ic(svg`<rect x="4.5" y="1.5" width="10" height="10" fill="none" stroke="#afb1b3"/><path d="M1.5 5v9.5h10" fill="none" stroke="#afb1b3"/>`, 16) }])}
          <span class="msg">Creates new HTML file</span>
          <span class="help">${ic(svg`<ellipse cx="7" cy="6.5" rx="6.8" ry="5.8" fill="#afb1b3"/><text x="7" y="10" text-anchor="middle" font-size="9" font-weight="700" font-family="Liberation Sans, sans-serif" fill=${DARK}>?</text><path d=${gearPath(12, 12.5, 3.8, 2.8)} fill="#afb1b3"/><circle cx="12" cy="12.5" r="1.2" fill=${DARK}/>`, 18)}</span>
        </div>
      </div>

      <div class="popup main">${this.menu(mainMenu)}</div>
      <div class="popup sub">${this.menu(newMenu)}</div>
      ${this.meter()}
    `;
  }
}
